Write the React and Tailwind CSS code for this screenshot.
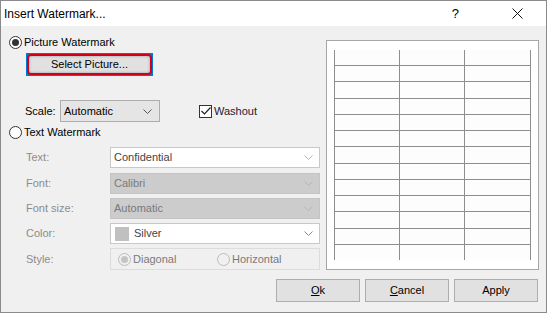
import React from "react";

const Chevron = ({ color = "#6b6b6b" }) => (
  <svg width="9" height="5" viewBox="0 0 9 5" className="shrink-0">
    <polyline points="0.5,0.5 4.5,4.5 8.5,0.5" fill="none" stroke={color} strokeWidth="1" />
  </svg>
);

const Radio = ({ checked, disabled }) => (
  <span
    className={`w-[13px] h-[13px] rounded-full border flex items-center justify-center shrink-0 ${
      disabled ? "border-[#bcbcbc] bg-[#f0f0f0]" : "border-[#333] bg-white"
    }`}
  >
    {checked && (
      <span
        className={`w-[7px] h-[7px] rounded-full ${disabled ? "bg-[#c4c4c4]" : "bg-[#333]"}`}
      />
    )}
  </span>
);

const Combo = ({ value, disabled, white, swatch, chevron = "#b5b5b5" }) => (
  <div
    className={`w-[210px] h-[21px] border flex items-center pl-[3px] pr-[6px] shrink-0 ${
      disabled ? "bg-[#cccccc] border-[#c4c4c4] text-[#7a7a7a]" : "bg-white border-[#c8c8c8] text-[#444]"
    }`}
  >
    {swatch && <span className="w-[14px] h-[14px] bg-[#c0c0c0] mr-[5px] ml-[1px]" />}
    <span className="flex-1">{value}</span>
    <Chevron color={white ? "#8a8a8a" : chevron} />
  </div>
);

const Row = ({ label, children, mt }) => (
  <div className={`flex items-center ${mt}`}>
    <span className="w-[101px] shrink-0 pl-[17px] text-[#8c8c8c]">{label}</span>
    {children}
  </div>
);

const Btn = ({ children }) => (
  <button className="w-[84px] h-[23px] bg-[#e1e1e1] border border-[#adadad] text-black">
    {children}
  </button>
);

export default function App() {
  return (
    <div
      className="w-[547px] h-[313px] border border-[#8a8a8a] flex flex-col text-[11px] text-black overflow-hidden"
      style={{ fontFamily: "'Liberation Sans', Arial, sans-serif" }}
    >
      {/* Title bar */}
      <div className="h-[25px] bg-white flex items-center shrink-0">
        <span className="pl-[3px] text-[12px] flex-1">Insert Watermark...</span>
        <span className="text-[13px] mr-[53px]">?</span>
        <svg width="11" height="11" viewBox="0 0 11 11" className="mr-[23px]">
          <path d="M0.5 0.5 L10.5 10.5 M10.5 0.5 L0.5 10.5" stroke="#111" strokeWidth="1" />
        </svg>
      </div>

      {/* Body */}
      <div className="flex-1 bg-[#f0f0f0] flex flex-col">
        <div className="flex">
          {/* Left column */}
          <div className="w-[319px] shrink-0 pl-[8px] pt-[10px] flex flex-col">
            <label className="flex items-center gap-[2px] h-[13px]">
              <Radio checked />
              <span>Picture Watermark</span>
            </label>

            <div className="ml-[17px] mt-[4px] w-[127px] h-[23px] border-[1px] border-[#0078d7] bg-[#0078d7]">
              <div className="w-full h-full rounded-[4px] border-2 border-[#d1001c] bg-[#e1e1e1] shadow-[inset_0_0_3px_#999] flex items-center justify-center">
                Select Picture...
              </div>
            </div>

            <div className="flex items-center mt-[24px] h-[22px]">
              <span className="ml-[16px] w-[35px]">Scale:</span>
              <div className="w-[100px] h-[22px] bg-[#e5e5e5] border border-[#adadad] flex items-center pl-[3px] pr-[7px]">
                <span className="flex-1">Automatic</span>
                <Chevron color="#555" />
              </div>
              <label className="flex items-center gap-[2px] ml-[39px]">
                <span className="w-[13px] h-[13px] border border-[#333] bg-white flex items-center justify-center">
                  <svg width="10" height="8" viewBox="0 0 10 8">
                    <polyline points="0.5,4 3.5,7 9.5,0.5" fill="none" stroke="#222" strokeWidth="1.2" />
                  </svg>
                </span>
                <span className="text-[#1a1a3a]">Washout</span>
              </label>
            </div>

            <label className="flex items-center gap-[2px] h-[13px] mt-[4px]">
              <Radio />
              <span>Text Watermark</span>
            </label>

            <Row label="Text:" mt="mt-[8px]">
              <Combo value="Confidential" />
            </Row>
            <Row label="Font:" mt="mt-[5px]">
              <Combo value="Calibri" disabled />
            </Row>
            <Row label="Font size:" mt="mt-[4px]">
              <Combo value="Automatic" disabled />
            </Row>
            <Row label="Color:" mt="mt-[4px]">
              <Combo value="Silver" swatch white />
            </Row>
            <Row label="Style:" mt="mt-[4px]">
              <div className="w-[210px] h-[22px] shrink-0 border border-[#dcdcdc] flex items-center pl-[7px] text-[#7a7a7a]">
                <label className="flex items-center gap-[2px] w-[99px]">
                  <Radio checked disabled />
                  <span>Diagonal</span>
                </label>
                <label className="flex items-center gap-[2px]">
                  <Radio disabled />
                  <span>Horizontal</span>
                </label>
              </div>
            </Row>
          </div>

          {/* Preview */}
          <div className="ml-[6px] mt-[14px] w-[213px] h-[230px] border border-[#a6a6a6] bg-white pt-[9px] px-[7px]">
            <div className="border-x border-[#8e8e8e] h-[210px] flex flex-col">
              {Array.from({ length: 13 }).map((_, i) => (
                <div
                  key={i}
                  className={`flex-1 grid grid-cols-3 bg-[#fdfdfd] ${
                    i < 12 ? "border-b border-[#8e8e8e] shadow-[0_1px_0_#d4d4d4]" : ""
                  }`}
                >
                  <div className="border-r border-[#8e8e8e]" />
                  <div className="border-r border-[#8e8e8e]" />
                  <div />
                </div>
              ))}
            </div>
          </div>
        </div>

        {/* Buttons */}
        <div className="flex justify-end gap-[5px] pr-[8px] mt-[9px]">
          <Btn>
            <span className="underline">O</span>k
          </Btn>
          <Btn>
            <span className="underline">C</span>ancel
          </Btn>
          <Btn>Apply</Btn>
        </div>
      </div>
    </div>
  );
}
